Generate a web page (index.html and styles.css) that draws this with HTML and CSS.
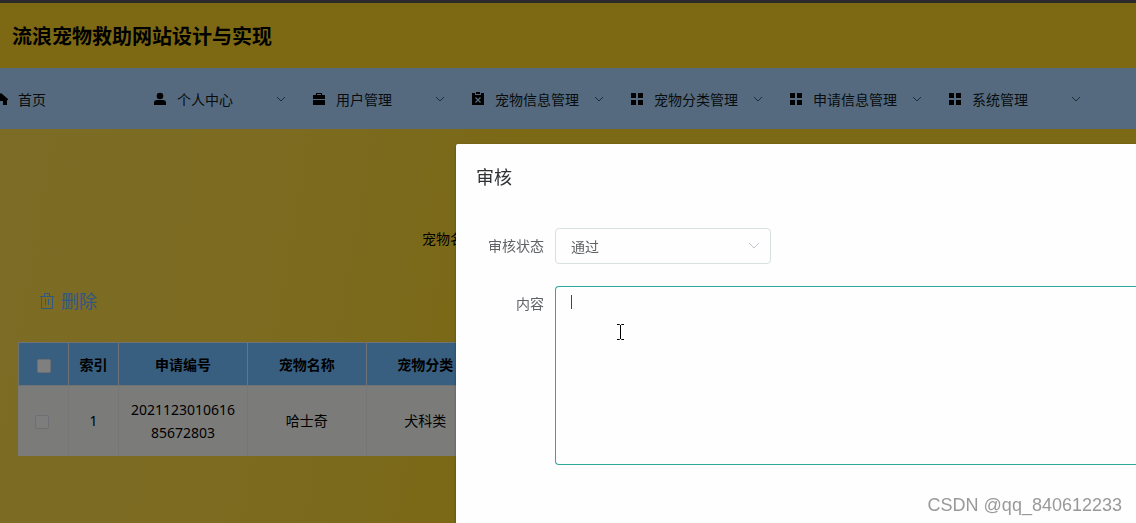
FILE: index.html
```
<!DOCTYPE html>
<html lang="zh-CN">
  <head>
    <meta charset="utf-8">
    <title>流浪宠物救助网站设计与实现</title>
    <link rel="stylesheet" href="styles.css">
  </head>
  <body>
    <header class="header">
      <h1 class="site-title">流浪宠物救助网站设计与实现</h1>
    </header>

    <!-- main menu -->
    <nav class="nav">
      <ul class="menu">
        <li><a href="#" class="menu-item">
          <svg class="icon" viewBox="0 0 14 14"><path d="M7 1 14 7v1h-1v5H9V9H5v4H1V8H0V7z"/></svg>
          <span>首页</span>
        </a></li>
        <li><a href="#" class="menu-item">
          <svg class="icon" viewBox="0 0 14 14"><circle cx="7" cy="4" r="3.300"/><path d="M1 13v-2q0-3 3-3h6q3 0 3 3v2z"/></svg>
          <span>个人中心</span>
          <svg class="arrow" viewBox="0 0 12 12"><path d="M2 4l4 4 4-4"/></svg>
        </a></li>
        <li><a href="#" class="menu-item">
          <svg class="icon" viewBox="0 0 14 14"><path d="M4 3V1h6v2h3v4H1V3zM5 3h4V2H5zM1 8h12v5H1z" fill-rule="evenodd"/></svg>
          <span>用户管理</span>
          <svg class="arrow" viewBox="0 0 12 12"><path d="M2 4l4 4 4-4"/></svg>
        </a></li>
        <li><a href="#" class="menu-item">
          <svg class="icon" viewBox="0 0 14 14"><path d="M1 1h3v2h6V1h3v12H1zM5 0h4v2H5z"/><path d="M4.500 5.500l5 5M9.500 5.500l-5 5" stroke="#abd5ff" stroke-width="1.300"/></svg>
          <span>宠物信息管理</span>
          <svg class="arrow" viewBox="0 0 12 12"><path d="M2 4l4 4 4-4"/></svg>
        </a></li>
        <li><a href="#" class="menu-item">
          <svg class="icon" viewBox="0 0 14 14"><path d="M1 1h5v5H1zM8 1h5v5H8zM1 8h5v5H1zM8 8h5v5H8z"/></svg>
          <span>宠物分类管理</span>
          <svg class="arrow" viewBox="0 0 12 12"><path d="M2 4l4 4 4-4"/></svg>
        </a></li>
        <li><a href="#" class="menu-item">
          <svg class="icon" viewBox="0 0 14 14"><path d="M1 1h5v5H1zM8 1h5v5H8zM1 8h5v5H1zM8 8h5v5H8z"/></svg>
          <span>申请信息管理</span>
          <svg class="arrow" viewBox="0 0 12 12"><path d="M2 4l4 4 4-4"/></svg>
        </a></li>
        <li><a href="#" class="menu-item">
          <svg class="icon" viewBox="0 0 14 14"><path d="M1 1h5v5H1zM8 1h5v5H8zM1 8h5v5H1zM8 8h5v5H8z"/></svg>
          <span>系统管理</span>
          <svg class="arrow" viewBox="0 0 12 12"><path d="M2 4l4 4 4-4"/></svg>
        </a></li>
      </ul>
    </nav>

    <main class="content">
      <div class="search">宠物名称</div>
      <button type="button" class="delete-btn">
        <svg class="trash" viewBox="0 0 16 18"><path d="M1 4.500h14M5.500 4V1.500h5V4M2.500 4.500v12h11v-12M6.500 7v6M9.500 7v6"/></svg>
        删除
      </button>
      <table class="table">
        <thead>
          <tr>
            <th class="col-check"><input type="checkbox" class="check" aria-label="全选"></th>
            <th class="col-index">索引</th>
            <th class="col-code">申请编号</th>
            <th class="col-name">宠物名称</th>
            <th class="col-name">宠物分类</th>
          </tr>
        </thead>
        <tbody>
          <tr>
            <td class="cell-check"><input type="checkbox" class="check check-row" aria-label="选择"></td>
            <td>1</td>
            <td class="code">202112301061685672803</td>
            <td>哈士奇</td>
            <td>犬科类</td>
          </tr>
        </tbody>
      </table>
    </main>

    <!-- review dialog -->
    <div class="overlay">
      <section class="dialog" role="dialog" aria-labelledby="dialogTitle">
        <h2 id="dialogTitle" class="dialog-title">审核</h2>
        <form>
          <div class="form-row">
            <label for="status" class="label">审核状态</label>
            <div class="select-box">
              <select id="status" class="select">
                <option>通过</option>
              </select>
              <svg class="arrow select-arrow" viewBox="0 0 12 12"><path d="M1 3l5 5 5-5"/></svg>
            </div>
          </div>
          <div class="form-row">
            <label for="reply" class="label">内容</label>
            <div class="text-box">
              <textarea id="reply" class="textarea"></textarea>
              <span class="caret"></span>
              <svg class="pointer" viewBox="0 0 9 18"><path d="M1 1.500h2.500l1 1 1-1H8M4.500 2v14M1 16.500h2.500l1-1 1 1H8"/></svg>
            </div>
          </div>
        </form>
      </section>
    </div>
    <div class="watermark">CSDN @qq_840612233</div>
  </body>
</html>
```
FILE: styles.css
```
* {
  box-sizing: border-box;
}

body {
  margin: 0;
  min-height: 100vh;
  overflow: hidden;
  border-top: 3px solid #555;
  background: linear-gradient(100deg, #fad84c, #f8d63e 30%, #f6d22c 45%);
  font-family: "Noto Sans", "Noto Sans CJK SC", sans-serif;
  font-size: 14px;
  color: #000;
}

.header {
  display: flex;
  align-items: center;
  height: 65px;
  padding: 3px 12px 0;
  background: #fad226;
}

.site-title {
  margin: 0;
  font-size: 20px;
  line-height: 28px;
}

.nav {
  background: #abd5ff;
}

/* menu is scrolled a little to the left */
.menu {
  display: flex;
  margin: 0 0 0 -26px;
  padding: 0;
  list-style: none;
}

.menu-item {
  display: flex;
  align-items: center;
  gap: 10px;
  width: 159px;
  height: 61px;
  padding: 0 5px 0 20px;
  color: #101820;
  text-decoration: none;
  white-space: nowrap;
}

.icon {
  flex: none;
  width: 14px;
  height: 14px;
  fill: #000;
}

.arrow {
  flex: none;
  width: 12px;
  height: 12px;
  margin-left: auto;
  fill: none;
  stroke: #405468;
}

.content {
  padding: 99px 18px 0;
}

.search {
  padding-left: 404px;
  line-height: 22px;
}

.delete-btn {
  display: flex;
  align-items: center;
  gap: 6px;
  margin: 38px 0 28px 21px;
  padding: 0;
  border: 0;
  background: none;
  font-family: inherit;
  font-size: 18px;
  line-height: 26px;
  color: #62b0ff;
}

.trash {
  width: 16px;
  height: 18px;
  fill: none;
  stroke: #62b0ff;
}

.table {
  width: 467px;
  table-layout: fixed;
  border-collapse: collapse;
  border: 1px solid #f4f4f4;
  text-align: center;
}

.col-check,
.col-index {
  width: 50px;
}

.col-code {
  width: 129px;
}

.table th {
  height: 43px;
  padding: 0;
  border: 1px solid #dfe6ec;
  background: #70bfff;
}

.table td {
  height: 70px;
  padding: 0 10px;
  border-right: 1px solid #ececec;
  background: #f6f6f4;
  line-height: 23px;
}

.table .cell-check {
  padding: 0 14px 0 10px;
}

.table .code {
  word-break: break-all;
}

.check {
  appearance: none;
  display: inline-block;
  width: 14px;
  height: 14px;
  margin: 0;
  border: 1px solid #dcdfe6;
  border-radius: 2px;
  background: #fff;
  vertical-align: middle;
}

.check-row {
  background: #fafafa;
}

.overlay {
  position: fixed;
  inset: 0;
  display: flex;
  padding: 144px 0 0 456px;
  background: rgba(0, 0, 0, 0.5);
}

.dialog {
  flex: 1;
  padding: 20px 0 20px 20px;
  border-radius: 2px 0 0 0;
  background: #fefefe;
  box-shadow: 0 1px 3px rgba(0, 0, 0, 0.3);
  color: #606266;
}

.dialog-title {
  margin: 0 0 38px;
  font-size: 18px;
  font-weight: 400;
  line-height: 26px;
  color: #303133;
}

.form-row {
  display: flex;
  margin-bottom: 22px;
}

.label {
  width: 79px;
  padding-right: 11px;
  line-height: 36px;
  text-align: right;
}

.select-box {
  position: relative;
  width: 216px;
}

.select {
  appearance: none;
  width: 100%;
  height: 36px;
  padding: 0 30px 0 15px;
  border: 1px solid #d6e2e2;
  border-radius: 4px;
  background: #fefefe;
  font: inherit;
  color: #606266;
}

.select-arrow {
  position: absolute;
  top: 12px;
  right: 11px;
  stroke: #c0c4cc;
}

.text-box {
  position: relative;
  flex: 1;
}

.textarea {
  display: block;
  width: 100%;
  height: 179px;
  padding: 5px 15px;
  border: 1px solid #2fa89a;
  border-right: 0;
  border-radius: 4px 0 0 4px;
  outline: none;
  background: #fefefe;
  font: inherit;
  resize: none;
}

.caret {
  position: absolute;
  top: 9px;
  left: 16px;
  width: 1px;
  height: 14px;
  background: #444;
}

.pointer {
  position: absolute;
  top: 37px;
  left: 61px;
  width: 9px;
  height: 18px;
  fill: none;
  stroke: #000;
}

.watermark {
  position: fixed;
  right: 14px;
  bottom: 7px;
  font-family: "Liberation Sans", Arial, sans-serif;
  font-size: 18px;
  line-height: 22px;
  color: #999;
}
```
